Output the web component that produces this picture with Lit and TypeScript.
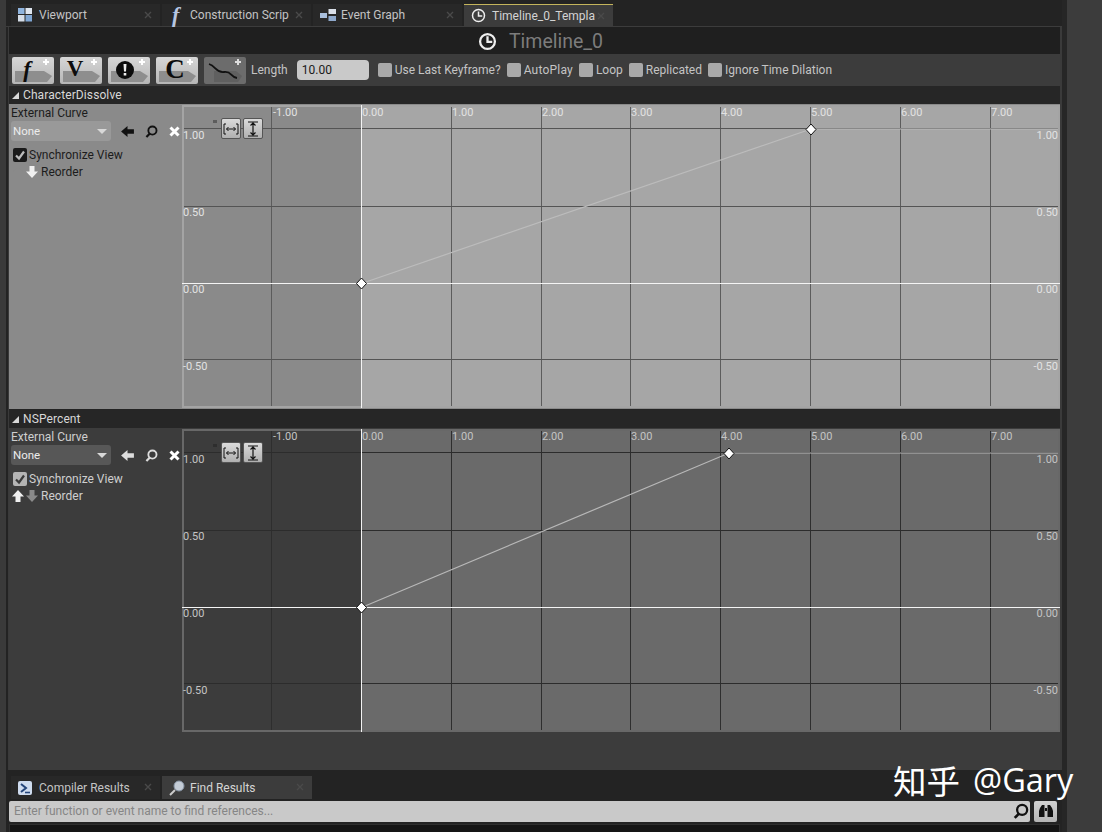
import { LitElement, html, css, svg } from "lit";
import { customElement, property } from "lit/decorators.js";

const TICKS = [
  { x: 89, tx: 91, label: "-1.00" },
  { x: 179, tx: 180, label: "0.00" },
  { x: 269, tx: 270, label: "1.00" },
  { x: 359, tx: 360, label: "2.00" },
  { x: 448, tx: 449, label: "3.00" },
  { x: 538, tx: 539, label: "4.00" },
  { x: 628, tx: 629, label: "5.00" },
  { x: 718, tx: 719, label: "6.00" },
  { x: 808, tx: 809, label: "7.00" },
];
const ROWS = [
  { y: 23, ly: 34, label: "1.00" },
  { y: 101, ly: 111, label: "0.50" },
  { y: 178, ly: 188, label: "0.00" },
  { y: 254, ly: 265, label: "-0.50" },
];

const clock = (size: number, sw: number) => html`<svg width=${size} height=${size} viewBox="0 0 20 20">
  <circle cx="10" cy="10" r=${9 - sw / 2} fill="none" stroke="#eee" stroke-width=${sw}></circle>
  <path d="M10 4.5V10.5H15" fill="none" stroke="#eee" stroke-width=${sw}></path>
</svg>`;

const viewportIcon = html`<svg width="14" height="14" viewBox="0 0 14 14">
  <rect x="0" y="0" width="6.500" height="6" fill="#8fb4de"></rect>
  <rect x="7.500" y="0" width="6.500" height="6" fill="#dfe6f0"></rect>
  <rect x="0" y="7" width="6.500" height="6.500" fill="#d5dde8"></rect>
  <rect x="7.500" y="7" width="6.500" height="6.500" fill="#7fa6d4"></rect>
</svg>`;

const graphIcon = html`<svg width="16" height="12" viewBox="0 0 16 12">
  <rect x="0" y="4" width="7" height="5" fill="#a9bfdc"></rect>
  <rect x="8.500" y="0" width="7.500" height="5" fill="#d9dfe8"></rect>
  <rect x="8.500" y="7" width="7.500" height="5" fill="#8fa9cc"></rect>
</svg>`;

const closeX = html`<svg class="close" width="8" height="8" viewBox="0 0 8 8">
  <path d="M1 1L7 7M7 1L1 7" stroke="#4a4a4a" stroke-width="1.400"></path>
</svg>`;

const plus = svg`<path d="M31 5H37M34 2V8" stroke="#fff" stroke-width="2"></path>`;

@customElement("curve-track")
export class CurveTrack extends LitElement {
  @property() name = "";
  @property({ type: Boolean }) light = false;
  @property({ type: Number }) keyX = 0;

  static styles = css`
    :host {
      display: block;
    }
    .head {
      height: 18px;
      display: flex;
      align-items: center;
      gap: 4px;
      padding-left: 3px;
      background: #262626;
      color: #d8d8d8;
      font-size: 12px;
      letter-spacing: 0.1px;
    }
    .tri {
      width: 0;
      height: 0;
      border-left: 7px solid transparent;
      border-bottom: 7px solid #d8d8d8;
    }
    .body {
      height: 305px;
      display: flex;
    }
    .light .body {
      background: #8a8a8a;
      color: #1c1c1c;
    }
    .dark .body {
      background: #3c3c3c;
      color: #cfcfcf;
    }
    .side {
      width: 173px;
      flex: none;
      padding: 2px 0 0 2px;
      box-sizing: border-box;
    }
    .lbl {
      height: 15px;
      line-height: 15px;
      font-size: 12px;
    }
    .tools {
      display: flex;
      align-items: center;
      height: 20px;
    }
    .combo {
      width: 100px;
      height: 20px;
      box-sizing: border-box;
      padding: 0 4px 0 2px;
      border-radius: 3px;
      display: flex;
      align-items: center;
      justify-content: space-between;
      font-size: 11.500px;
      color: #ececec;
    }
    .light .combo {
      background: #999999;
    }
    .dark .combo {
      background: #575757;
    }
    .caret {
      width: 0;
      height: 0;
      border: 5px solid transparent;
      border-top: 5px solid #d8d8d8;
      border-bottom: 0;
    }
    .tool {
      margin-left: 10px;
      display: flex;
    }
    .tool + .tool {
      margin-left: 11px;
    }
    .sync {
      display: flex;
      align-items: center;
      gap: 2px;
      margin: 6px 0 0 2px;
      height: 15px;
      font-size: 12px;
    }
    .chk {
      width: 14px;
      height: 14px;
      border-radius: 2px;
      display: flex;
    }
    .light .chk {
      background: #1a1a1a;
    }
    .dark .chk {
      background: #b4b4b4;
    }
    .reorder {
      display: flex;
      align-items: center;
      margin: 1px 0 0 1px;
      height: 17px;
      font-size: 12px;
      gap: 2px;
    }
    .order-label {
      margin-left: 1px;
    }
    .graph {
      flex: 1;
      position: relative;
      margin-top: 1px;
      height: 303px;
    }
    .graph svg {
      display: block;
    }
    .fit {
      position: absolute;
      top: 13px;
      width: 20px;
      height: 21px;
      border-radius: 2px;
      background: linear-gradient(#dadada, #b0b0b0);
      border: 1px solid #555;
      box-sizing: border-box;
      display: flex;
      align-items: center;
      justify-content: center;
    }
    .fit.h {
      left: 39px;
    }
    .fit.v {
      left: 61px;
    }
    text {
      font-family: Roboto, "Liberation Sans", sans-serif;
      font-size: 11px;
    }
  `;

  private arrow(d: "up" | "down", color: string) {
    const path = d === "down" ? "M3.500 0H8.500V5.500H12L6 12L0 5.500H3.500Z" : "M6 0L12 6.500H8.500V12H3.500V6.500H0Z";
    return html`<svg width="12" height="12" viewBox="0 0 12 12"><path d=${path} fill=${color}></path></svg>`;
  }

  private plot() {
    const c = this.light
      ? { left: "#8a8a8a", right: "#a6a6a6", grid: "#5c5c5c", hline: "#545454", border: "#a4a4a4", curve: "#bcbcbc", text: "#e2e2e2" }
      : { left: "#3c3c3c", right: "#6a6a6a", grid: "#2e2e2e", hline: "#2c2c2c", border: "#686868", curve: "#b8b8b8", text: "#c4c4c4" };
    const top = 24;
    const zero = 179;
    return svg`<svg width="878" height="303" viewBox="0 0 878 303">
      <rect width="878" height="303" fill=${c.right}></rect>
      <rect width="179" height="303" fill=${c.left}></rect>
      ${TICKS.map((t) =>
        t.x === 179 ? null : svg`<line x1=${t.x + 0.5} x2=${t.x + 0.5} y1="0" y2="303" stroke=${c.grid}></line>`
      )}
      ${ROWS.map((r) =>
        r.y === 178 ? null : svg`<line x1="0" x2="878" y1=${r.y + 0.5} y2=${r.y + 0.5} stroke=${c.hline}></line>`
      )}
      <polyline points="179.500,178.500 ${this.keyX},${top} 878,${top}" fill="none" stroke=${c.curve} stroke-width="1.200"></polyline>
      <rect x="1" y="1" width="876" height="301" fill="none" stroke=${c.border} stroke-width="2"></rect>
      <line x1="0" x2="878" y1="178.500" y2="178.500" stroke="#f4f4f4"></line>
      <line x1="179.500" x2="179.500" y1="0" y2="303" stroke="#f4f4f4"></line>
      ${TICKS.map((t) => svg`<text x=${t.tx} y="11" fill=${c.text}>${t.label}</text>`)}
      ${ROWS.map(
        (r) => svg`<text x="1" y=${r.ly} fill=${c.text}>${r.label}</text>
          <text x="876" y=${r.ly} text-anchor="end" fill=${c.text}>${r.label}</text>`
      )}
      <path d="M${zero + 0.5} 173L${zero + 5.5} 178.500L${zero + 0.5} 184L${zero - 4.5} 178.500Z" fill="#fff" stroke="#111"></path>
      <path d="M${this.keyX} 19L${this.keyX + 5} 24.500L${this.keyX} 30L${this.keyX - 5} 24.500Z" fill="#fff" stroke="#111"></path>
      <rect x="31" y="15" width="4" height="3" fill=${c.grid}></rect>
    </svg>`;
  }

  render() {
    const ink = this.light ? "#111" : "#ddd";
    return html`<div class=${this.light ? "light" : "dark"}>
      <div class="head"><span class="tri"></span>${this.name}</div>
      <div class="body">
        <div class="side">
          <div class="lbl">External Curve</div>
          <div class="tools">
            <div class="combo">None<span class="caret"></span></div>
            <span class="tool">
              <svg width="13" height="11" viewBox="0 0 14 12"><path d="M7 0V3.500H14V8.500H7V12L0 6Z" fill=${ink}></path></svg>
            </span>
            <span class="tool">
              <svg width="13" height="13" viewBox="0 0 14 14"><circle cx="8" cy="6" r="4.400" fill="none" stroke=${ink} stroke-width="2"></circle><path d="M5 9.500L1.500 13" stroke=${ink} stroke-width="2.400"></path></svg>
            </span>
            <span class="tool">
              <svg width="11" height="11" viewBox="0 0 11 11"><path d="M1.500 1.500L9.500 9.500M9.500 1.500L1.500 9.500" stroke="#fff" stroke-width="3"></path></svg>
            </span>
          </div>
          <div class="sync">
            <span class="chk"><svg width="14" height="14" viewBox="0 0 14 14"><path d="M3 7.500L6 10.500L11 3.500" fill="none" stroke=${this.light ? "#bbb" : "#3a3a3a"} stroke-width="2.200"></path></svg></span>
            <span>Synchronize View</span>
          </div>
          <div class="reorder">
            ${this.arrow("up", this.light ? "#8a8a8a" : "#f0f0f0")}
            ${this.arrow("down", this.light ? "#f0f0f0" : "#8a8a8a")}
            <span class="order-label">Reorder</span>
          </div>
        </div>
        <div class="graph">
          ${this.plot()}
          <div class="fit h">
            <svg width="16" height="12" viewBox="0 0 16 12"><path d="M3 1H1V11H3M13 1H15V11H13M3.500 6H12.500M5.500 4L3.500 6L5.500 8M10.500 4L12.500 6L10.500 8" fill="none" stroke="#111"></path></svg>
          </div>
          <div class="fit v">
            <svg width="14" height="16" viewBox="0 0 14 16"><path d="M2 1H12M2 15H12M7 2V14M4.500 4.500L7 2L9.500 4.500M4.500 11.500L7 14L9.500 11.500" fill="none" stroke="#111" stroke-width="1.200"></path></svg>
          </div>
        </div>
      </div>
    </div>`;
  }
}

@customElement("app-root")
export class AppRoot extends LitElement {
  static styles = css`
    :host {
      display: block;
      width: 1102px;
      height: 832px;
      overflow: hidden;
      position: relative;
      font-family: Roboto, "Liberation Sans", sans-serif;
      background: #3c3c3c;
    }
    .page {
      display: flex;
      height: 832px;
    }
    .edge {
      width: 6px;
      flex: none;
      background: #3a3a3a;
    }
    .main {
      width: 1056px;
      flex: none;
      background: #232323;
      display: flex;
      flex-direction: column;
    }
    .rail {
      width: 5px;
      flex: none;
      background: #262626;
    }
    .right {
      flex: 1;
      background: #3c3c3c;
    }
    .tabs {
      height: 26px;
      flex: none;
      display: flex;
      align-items: flex-end;
      padding-left: 5px;
      gap: 2px;
      border-bottom: 1px solid #3c3c3c;
    }
    .tab {
      width: 149px;
      height: 22px;
      box-sizing: border-box;
      display: flex;
      align-items: center;
      padding-left: 7px;
      gap: 5px;
      background: #282828;
      color: #c4c4c4;
      font-size: 12px;
      position: relative;
    }
    .tab.active {
      background: #3c3c3c;
      border-top: 1px solid #c4b45c;
      color: #d4d4d4;
    }
    .tab.find {
      background: #3c3c3c;
      color: #d4d4d4;
      width: 150px;
    }
    .tab .ico {
      width: 16px;
      display: flex;
      justify-content: flex-start;
      align-items: center;
    }
    .tab .t {
      white-space: nowrap;
    }
    .fn {
      font: italic 700 22px/20px "Liberation Serif", serif;
      color: #b7c6e2;
      margin-left: 3px;
    }
    .close {
      position: absolute;
      right: 8px;
      top: 7px;
    }
    .frame {
      margin-left: 2px;
      flex: 1;
      display: flex;
      flex-direction: column;
      border-left: 1px solid #3a3a3a;
      border-right: 2px solid #3a3a3a;
      min-height: 0;
    }
    .title {
      height: 27px;
      flex: none;
      background: #1f1f1f;
      display: flex;
      align-items: center;
      justify-content: center;
      gap: 12px;
      font-size: 19.500px;
      color: #7c7c7c;
      padding: 1px 0 0 12px;
      box-sizing: border-box;
    }
    .bar {
      height: 32px;
      flex: none;
      background: #3c3c3c;
      display: flex;
      align-items: center;
      padding-left: 3px;
      color: #c4c4c4;
      font-size: 12px;
    }
    .btn {
      width: 42px;
      height: 27px;
      margin-right: 6px;
      box-sizing: border-box;
      border-radius: 2px;
      background: linear-gradient(#d6d6d6, #b6b6b6);
      position: relative;
      flex: none;
      color: #0c0c0c;
      display: flex;
      justify-content: center;
      align-items: center;
    }
    .btn.curve {
      background: #6c6c6c;
    }
    .btn svg {
      position: absolute;
      left: 0;
      top: 0;
    }
    .btn b {
      position: relative;
      font-family: "Liberation Serif", serif;
      font-weight: 700;
      line-height: 24px;
      margin-bottom: 2px;
    }
    .btn b.f {
      font-style: italic;
      font-size: 23px;
      margin-right: 12px;
      margin-bottom: 0;
    }
    .btn b.v {
      font-size: 23px;
      margin-right: 12px;
    }
    .btn b.c {
      font-size: 27px;
      margin-right: 4px;
    }
    .len {
      margin: 0 9px 0 -1px;
    }
    .input {
      width: 72px;
      height: 20px;
      background: #c9c9c9;
      border-radius: 4px;
      color: #1a1a1a;
      display: flex;
      align-items: center;
      padding-left: 5px;
      box-sizing: border-box;
      margin-right: 9px;
    }
    .opt {
      display: flex;
      align-items: center;
      gap: 3px;
      margin-right: 6px;
    }
    .opt.wide {
      letter-spacing: 0.2px;
    }
    .box {
      width: 14px;
      height: 14px;
      background: #a9a9a9;
      border-radius: 2px;
    }
    .fill {
      flex: 1;
      background: #3c3c3c;
    }
    curve-track + curve-track {
      margin-top: 1px;
    }
    .bottom {
      flex: none;
      height: 56px;
      background: #232323;
      margin-top: 6px;
    }
    .btabs {
      display: flex;
      height: 23px;
      padding-left: 5px;
      gap: 2px;
    }
    .btabs .tab {
      height: 23px;
    }
    .search {
      display: flex;
      align-items: center;
      height: 22px;
      gap: 4px;
      margin: 1px 5px 0 3px;
    }
    .field {
      flex: 1;
      height: 21px;
      background: #c9c9c9;
      border-radius: 2px;
      color: #868686;
      font-size: 12px;
      display: flex;
      align-items: center;
      padding: 0 1px 0 5px;
      justify-content: space-between;
    }
    .binoc {
      width: 23px;
      height: 21px;
      background: linear-gradient(#d2d2d2, #b4b4b4);
      border-radius: 2px;
      display: flex;
      align-items: center;
      justify-content: center;
    }
    .results {
      height: 9px;
      margin: 2px 2px 0 3px;
      background: #151515;
      border: 1px solid #2e2e2e;
      border-bottom: 0;
    }
    .mark {
      position: absolute;
      left: 893px;
      top: 759px;
      color: #fff;
      font-size: 33.500px;
      line-height: 42px;
      white-space: nowrap;
      font-family: "Noto Sans CJK SC", sans-serif;
      display: flex;
      gap: 13px;
    }
    .mark .at {
      font-family: "Open Sans", sans-serif;
      font-size: 32.500px;
    }
  `;

  private btn(label: string, cls: string) {
    return html`<div class="btn">
      <svg width="42" height="27" viewBox="0 0 42 27">
        <path d="M3 14H32L40 19L35 25H3Z" fill="#8e8e8e"></path>
        ${plus}
      </svg>
      <b class=${cls}>${label}</b>
    </div>`;
  }

  render() {
    return html`<div class="page">
      <div class="edge"></div>
      <div class="main">
        <div class="tabs">
          <div class="tab"><span class="ico">${viewportIcon}</span><span class="t">Viewport</span>${closeX}</div>
          <div class="tab"><span class="ico"><span class="fn">f</span></span><span class="t">Construction Scrip</span>${closeX}</div>
          <div class="tab"><span class="ico">${graphIcon}</span><span class="t">Event Graph</span>${closeX}</div>
          <div class="tab active"><span class="ico">${clock(15, 2)}</span><span class="t">Timeline_0_Templa</span>${closeX}</div>
        </div>
        <div class="frame">
          <div class="title">${clock(19, 2.4)}<span>Timeline_0</span></div>
          <div class="bar">
            ${this.btn("f", "f")}${this.btn("V", "v")}
            <div class="btn">
              <svg width="42" height="27" viewBox="0 0 42 27">
                <path d="M3 14H32L40 19L35 25H3Z" fill="#8e8e8e"></path>
                ${plus}
                <circle cx="17" cy="13" r="9" fill="#0c0c0c"></circle>
                <path d="M15.500 7H18.500L18 14.500H16ZM15.700 16H18.300V18.600H15.700Z" fill="#eee"></path>
              </svg>
            </div>
            ${this.btn("C", "c")}
            <div class="btn curve">
              <svg width="42" height="27" viewBox="0 0 42 27">
                <path d="M10 14H32L38 19L34 25H10Z" fill="#585858" opacity=".6"></path>
                <path d="M5 7C12 9 12 16 20 15C28 14 26 20 33 21" fill="none" stroke="#111" stroke-width="1.800"></path>
                <path d="M31 5H37M34 2V8" stroke="#ddd" stroke-width="2"></path>
              </svg>
            </div>
            <span class="len">Length</span>
            <div class="input">10.00</div>
            <div class="opt"><span class="box"></span>Use Last Keyframe?</div>
            <div class="opt wide"><span class="box"></span>AutoPlay</div>
            <div class="opt"><span class="box"></span>Loop</div>
            <div class="opt"><span class="box"></span>Replicated</div>
            <div class="opt"><span class="box"></span>Ignore Time Dilation</div>
          </div>
          <curve-track name="CharacterDissolve" light keyX="629"></curve-track>
          <curve-track name="NSPercent" keyX="547"></curve-track>
          <div class="fill"></div>
        </div>
        <div class="bottom">
          <div class="btabs">
            <div class="tab"><span class="ico"><svg width="14" height="14" viewBox="0 0 14 14"><rect width="14" height="14" rx="2" fill="#cfdcef"></rect><path d="M3 3L8 7L3 11" fill="none" stroke="#24457a" stroke-width="2"></path><path d="M7 11.500H12" stroke="#24457a" stroke-width="1.600"></path></svg></span><span class="t">Compiler Results</span>${closeX}</div>
            <div class="tab find"><span class="ico"><svg width="16" height="16" viewBox="0 0 16 16"><circle cx="10" cy="6" r="5" fill="#c4ccd6" stroke="#8894a4"></circle><path d="M6 10L1 15" stroke="#ccc" stroke-width="2"></path></svg></span><span class="t">Find Results</span>${closeX}</div>
          </div>
          <div class="search">
            <div class="field">Enter function or event name to find references...
              <svg width="16" height="16" viewBox="0 0 14 14"><circle cx="8" cy="6" r="4.400" fill="none" stroke="#111" stroke-width="2"></circle><path d="M5 9.500L1.500 13" stroke="#111" stroke-width="2.400"></path></svg>
            </div>
            <div class="binoc"><svg width="16" height="14" viewBox="0 0 16 14"><path d="M2 4L4 1H6.500V13H1V7ZM14 4L12 1H9.500V13H15V7Z" fill="#111"></path><rect x="7" y="4" width="2" height="3" fill="#111"></rect></svg></div>
          </div>
          <div class="results"></div>
        </div>
      </div>
      <div class="rail"></div>
      <div class="right"></div>
    </div>
    <div class="mark"><span>知乎</span><span class="at">@Gary</span></div>`;
  }
}
